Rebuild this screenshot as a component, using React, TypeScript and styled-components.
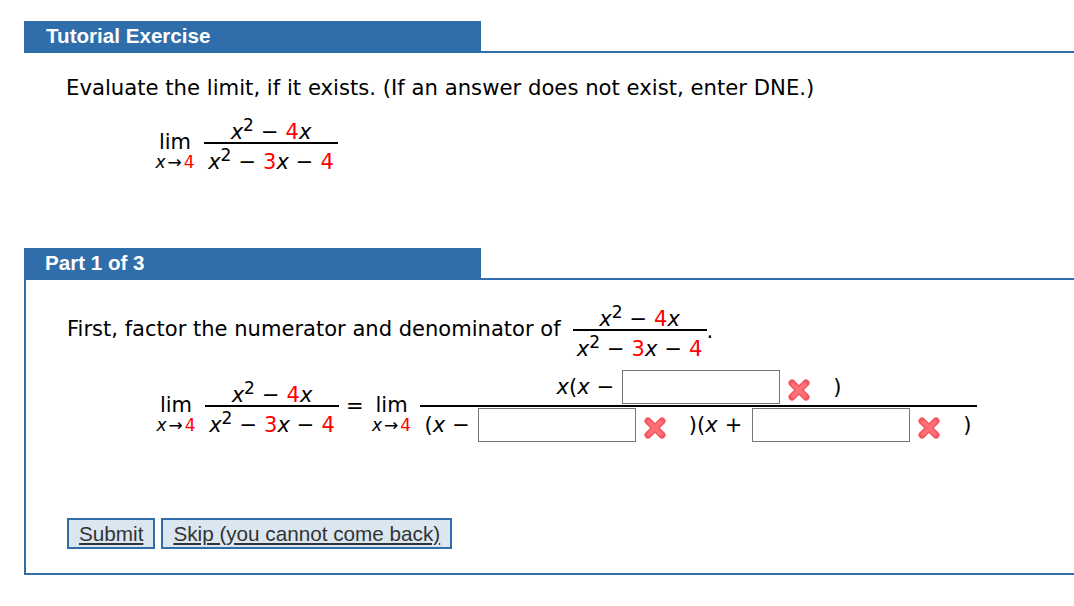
import React from 'react';
import styled, { createGlobalStyle } from 'styled-components';

const GlobalStyle = createGlobalStyle`
  body {
    margin: 0;
    background: #fff;
    color: #000;
    font-family: "DejaVu Sans", Verdana, sans-serif;
  }
`;

const CrossIcon: React.FC = () => (
    <CrossSvg viewBox="0 0 24 24">
        <path d="M5 5 L19 19 M19 5 L5 19" stroke="#f4545e" strokeWidth="7" strokeLinecap="round" />
        <path d="M6 6 L18 18 M18 6 L6 18" stroke="#ff6f76" strokeWidth="4" strokeLinecap="round" />
    </CrossSvg>
);

const XSquared: React.FC = () => (
    <><Var>x</Var><Sup>2</Sup></>
);

const Numerator: React.FC = () => (
    <><XSquared /><Op>−</Op><Red>4</Red><Var>x</Var></>
);

const Denominator: React.FC = () => (
    <><XSquared /><Op>−</Op><Red>3</Red><Var>x</Var><Op>−</Op><Red>4</Red></>
);

const Limit: React.FC<{ drop?: number }> = ({ drop = 8 }) => (
    <LimitBox $drop={drop}>
        <LimText>lim</LimText>
        <LimSub><Var>x</Var><Arrow>→</Arrow><Red>4</Red></LimSub>
    </LimitBox>
);

const App: React.FC = () => {
    return (<>
        <GlobalStyle />
        <Page>
            <Section>
                <HeaderRow>
                    <HeaderTab>Tutorial Exercise</HeaderTab>
                </HeaderRow>
                <IntroBody>
                    <Prompt>Evaluate the limit, if it exists. (If an answer does not exist, enter DNE.)</Prompt>
                    <IntroMath>
                        <Limit />
                        <Frac>
                            <Num><Numerator /></Num>
                            <Den><Denominator /></Den>
                        </Frac>
                    </IntroMath>
                </IntroBody>
            </Section>
            <PartSection>
                <HeaderRow>
                    <PartTab>Part 1 of 3</PartTab>
                </HeaderRow>
                <PartBody>
                    <FactorRow>
                        <FactorText>First, factor the numerator and denominator of</FactorText>
                        <FactorFrac>
                            <Num><Numerator /></Num>
                            <Den><Denominator /></Den>
                        </FactorFrac>
                        <Period>.</Period>
                    </FactorRow>
                    <EquationRow>
                        <Limit drop={16} />
                        <EquationFrac>
                            <Num><Numerator /></Num>
                            <Den><Denominator /></Den>
                        </EquationFrac>
                        <Equals>=</Equals>
                        <Limit drop={16} />
                        <AnswerFrac>
                            <AnswerNum>
                                <Var>x</Var>(<Var>x</Var><Op>−</Op>
                                <AnswerInput />
                                <CrossIcon />
                                <Close>)</Close>
                            </AnswerNum>
                            <AnswerDen>
                                (<Var>x</Var><Op>−</Op>
                                <AnswerInput />
                                <CrossIcon />
                                <MidClose>)(<Var>x</Var><Op>+</Op></MidClose>
                                <AnswerInput />
                                <CrossIcon />
                                <Close>)</Close>
                            </AnswerDen>
                        </AnswerFrac>
                    </EquationRow>
                    <Buttons>
                        <ActionButton>Submit</ActionButton>
                        <ActionButton>Skip (you cannot come back)</ActionButton>
                    </Buttons>
                </PartBody>
            </PartSection>
        </Page>
    </>);
};

export default App;

// Styled Components
const Page = styled.div`
  width: 1074px;
  height: 606px;
  padding: 21px 0 0 24px;
  box-sizing: border-box;
  overflow: hidden;
`;

const Section = styled.section`
  height: 227px;
`;

const PartSection = styled.section`
  height: 327px;
  border-left: 2px solid #2f6eab;
  border-bottom: 2px solid #2f6eab;
  box-sizing: border-box;
`;

const HeaderRow = styled.div`
  height: 32px;
  border-bottom: 2px solid #2f6eab;
  box-sizing: border-box;
`;

const HeaderTab = styled.div`
  width: 457px;
  height: 32px;
  padding-left: 22px;
  box-sizing: border-box;
  background: #2f6eab;
  color: #fff;
  font: bold 20.6px/30px "Liberation Sans", Arial, sans-serif;
`;

const PartTab = styled(HeaderTab)`
  margin-left: -2px;
  padding-left: 21px;
`;

const IntroBody = styled.div`
  padding: 20px 0 0 42px;
`;

const Prompt = styled.p`
  margin: 0;
  font-size: 21.2px;
  line-height: 29px;
  white-space: nowrap;
`;

const IntroMath = styled.div`
  display: flex;
  align-items: center;
  margin: 16px 0 0 84px;
`;

const PartBody = styled.div`
  padding: 0 0 0 41px;
`;

const FactorRow = styled.div`
  display: flex;
  align-items: center;
  height: 56px;
  margin-top: 20px;
`;

const FactorText = styled.span`
  font-size: 21.05px;
  margin-right: 8px;
  white-space: nowrap;
`;

const Period = styled.span`
  font-size: 21px;
  align-self: flex-end;
  margin-bottom: 13px;
`;

const EquationRow = styled.div`
  display: flex;
  align-items: center;
  margin: 13px 0 0 84px;
`;

const LimitBox = styled.div<{ $drop: number }>`
  display: flex;
  flex-direction: column;
  align-items: center;
  width: 50px;
  margin-top: ${(p) => p.$drop}px;
`;

const LimText = styled.span`
  font-size: 21px;
  line-height: 22px;
`;

const LimSub = styled.span`
  font-size: 17px;
  line-height: 18px;
  white-space: nowrap;
`;

const Arrow = styled.span`
  font-size: 17px;
  margin: 0 2px;
`;

const Frac = styled.div`
  display: inline-flex;
  flex-direction: column;
  align-items: center;
  font-size: 21px;
  margin-left: 4px;
`;

const FactorFrac = styled(Frac)`
  margin-top: 12px;
`;

const EquationFrac = styled(Frac)`
  margin-top: 8px;
`;

const Num = styled.div`
  width: 134px;
  height: 24px;
  line-height: 29px;
  text-align: center;
  border-bottom: 2px solid #000;
  white-space: nowrap;
`;

const Den = styled.div`
  height: 29px;
  padding-top: 3px;
  line-height: 31px;
  text-align: center;
  white-space: nowrap;
`;

const Var = styled.i`
  font-style: italic;
`;

const Sup = styled.sup`
  font-size: 17px;
  line-height: 0;
  position: relative;
  top: 0;
  vertical-align: super;
`;

const Op = styled.span`
  margin: 0 7px;
`;

const Red = styled.span`
  color: #f00;
`;

const Equals = styled.span`
  font-size: 21px;
  margin: 0 3px 0 7px;
`;

const AnswerFrac = styled.div`
  display: inline-flex;
  flex-direction: column;
  font-size: 21px;
  margin-left: 3px;
`;

const AnswerNum = styled.div`
  display: flex;
  align-items: center;
  justify-content: flex-start;
  height: 38px;
  width: 557px;
  padding: 0 0 1px 137px;
  box-sizing: border-box;
  border-bottom: 2px solid #000;
  white-space: pre;
`;

const AnswerDen = styled.div`
  display: flex;
  align-items: center;
  height: 35px;
  padding-left: 5px;
  white-space: pre;
`;

const AnswerInput = styled.input`
  width: 158px;
  height: 34px;
  box-sizing: border-box;
  border: 1px solid #767676;
  background: #fff;
  margin: 0 0 0 1px;
  padding: 0;
`;

const CrossSvg = styled.svg`
  width: 24px;
  height: 24px;
  margin: 6px 0 0 7px;
  flex: none;
  filter: blur(0.4px);
`;

const Close = styled.span`
  margin-left: 22px;
`;

const MidClose = styled.span`
  display: inline-block;
  margin: 0 2px 0 22px;
`;

const Buttons = styled.div`
  display: flex;
  gap: 6px;
  margin-top: 76px;
`;

const ActionButton = styled.button`
  height: 31px;
  padding: 0 10px;
  border: 2px solid #2f6eab;
  background: #dae6f0;
  color: #333;
  font: 20.7px/26px "Liberation Sans", Arial, sans-serif;
  text-decoration: underline;
  white-space: nowrap;
`;
